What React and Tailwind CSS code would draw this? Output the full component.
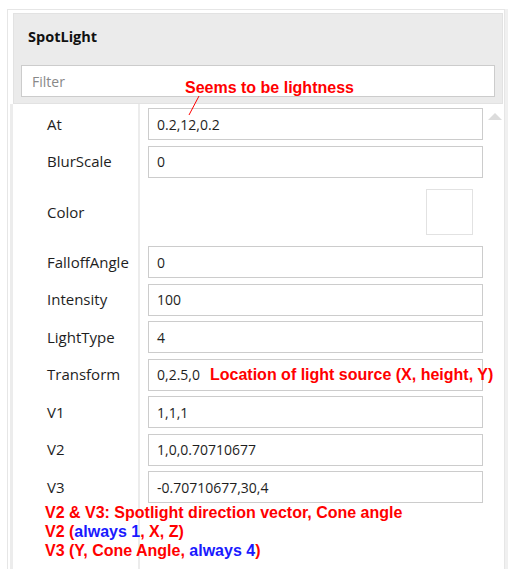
const rows = [
  { label: "At", value: "0.2,12,0.2" },
  { label: "BlurScale", value: "0" },
  { label: "Color", swatch: true },
  { label: "FalloffAngle", value: "0" },
  { label: "Intensity", value: "100" },
  { label: "LightType", value: "4" },
  { label: "Transform", value: "0,2.5,0" },
  { label: "V1", value: "1,1,1" },
  { label: "V2", value: "1,0,0.70710677" },
  { label: "V3", value: "-0.70710677,30,4" },
];

const note = "font-['Liberation_Sans',Arial,sans-serif] font-bold text-[16px] leading-[19px] text-[#ff0000]";

function Row({ label, value, swatch }) {
  return (
    <div className={`flex items-center ${swatch ? "h-[57.5px]" : "h-[32px]"}`}>
      <div className="w-[125px] h-full flex items-center pl-[34px] text-[15px] text-[#1e1e1e]">{label}</div>
      <div className="w-[2px] self-stretch" />
      <div className="flex-1 flex justify-end pl-[8px]">
        {swatch ? (
          <div className="w-[47px] h-[46px] border border-[#e2e2e2] bg-white mr-[10px]" />
        ) : (
          <div className="w-full h-[32px] border border-[#cccccc] bg-white flex items-center pl-[8px] text-[#1e1e1e]">
            {value}
          </div>
        )}
      </div>
    </div>
  );
}

export default function App() {
  return (
    <div className="relative w-[508px] h-[569px] overflow-hidden bg-white flex pt-[9px] pl-[7px] font-['Open_Sans','Noto_Sans',sans-serif] text-[14px]">
      <div className="w-[498px] h-full border-l border-t border-r border-[#e6e6e6] pl-[5px] pt-[3px] pr-[1px] flex flex-col">
        <div className="bg-[#ebebeb] border border-[#e2e2e2] h-[91px] px-[7px] flex flex-col">
          <div className="h-[46px] flex items-center pl-[7px] font-bold text-[14.5px] text-[#111]">SpotLight</div>
          <div className="mt-[5px] h-[32px] bg-white border border-[#cccccc] flex items-center pl-[10px] text-[#888]">Filter</div>
        </div>
        <div className="flex flex-1 -ml-[3px]">
          <div className="w-[3px] bg-[#ececec]" />
          <div className="flex-1 relative">
            <div className="absolute left-[125px] top-0 bottom-0 w-[2px] bg-[#ececec]" />
            <div className="absolute right-0 top-0 bottom-0 w-[17px] flex justify-center pt-[9px]">
              <div className="w-0 h-0 border-l-[7px] border-r-[7px] border-b-[7px] border-l-transparent border-r-transparent border-b-[#dcdcdc]" />
            </div>
            <div className="pt-[4px] pr-[20px] flex flex-col gap-[5.5px]">
              {rows.map((r) => (
                <Row key={r.label} {...r} />
              ))}
            </div>
          </div>
        </div>
      </div>
      <div className="w-[3px] h-full bg-[#f0f0f0]" />

      <div className={`absolute left-[185px] top-[78px] ${note}`}>Seems to be lightness</div>
      <svg className="absolute left-0 top-0" width="508" height="569">
        <line x1="199" y1="96" x2="189" y2="115" stroke="#ff0000" strokeWidth="1" />
      </svg>
      <div className={`absolute left-[210px] top-[365px] ${note}`}>Location of light source (X, height, Y)</div>
      <div className={`absolute left-[45px] top-[503px] ${note}`}>
        <div>V2 &amp; V3: Spotlight direction vector, Cone angle</div>
        <div>
          V2 (<span className="text-[#1a1aff]">always 1</span>, X, Z)
        </div>
        <div>
          V3 (Y, Cone Angle, <span className="text-[#1a1aff]">always 4</span>)
        </div>
      </div>
    </div>
  );
}
